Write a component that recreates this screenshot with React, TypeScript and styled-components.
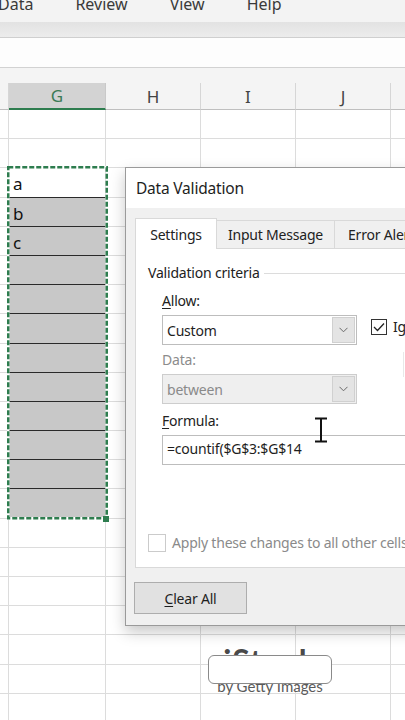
import React from "react";
import styled, { createGlobalStyle, css } from "styled-components";

const GlobalStyle = createGlobalStyle`
  html, body { margin: 0; padding: 0; background: #fff; }
  body { width: 405px; height: 720px; overflow: hidden; font-family: "Noto Sans", "Open Sans", sans-serif; }
  * { box-sizing: border-box; }
`;

const UI = `"Noto Sans", "Open Sans", sans-serif`;

const Screen = styled.div`
  position: relative;
  width: 405px;
  height: 720px;
  overflow: hidden;
  background: #fff;
  font-family: ${UI};
`;

const MenuBar = styled.div`
  height: 22px;
  background: #f3f3f3;
  display: flex;
  gap: 42px;
  margin-left: -2px;
  overflow: hidden;
`;

const MenuItem = styled.span`
  font-size: 16px;
  line-height: 16px;
  margin-top: -4px;
  color: #3a3a3a;
  white-space: nowrap;
`;

const RibbonEdge = styled.div`
  height: 16px;
  background: linear-gradient(#e2e2e2, #ececec);
  border-bottom: 1px solid #cfcfcf;
`;

const FormulaBar = styled.div`
  height: 30px;
  background: #fdfdfd;
  border-bottom: 1px solid #d2d2d2;
`;

const HeaderBand = styled.div`
  height: 42px;
  background: #f4f4f4;
  padding-top: 15px;
  display: flex;
`;

const HeaderCell = styled.div<{ $w: number; $sel?: boolean }>`
  width: ${(p) => p.$w}px;
  flex: none;
  height: 27px;
  display: flex;
  align-items: center;
  justify-content: center;
  font-size: 17px;
  color: #444;
  border-right: 1px solid #d6d6d6;
  border-bottom: 1px solid #bfbfbf;
  ${(p) =>
    p.$sel &&
    css`
      background: #d3d3d3;
      color: #3b7a55;
      border-bottom: 2px solid #2e7d4f;
      border-right-color: #c9c9c9;
    `}
`;

const Grid = styled.div`
  display: flex;
`;

const Column = styled.div<{ $w: number }>`
  width: ${(p) => p.$w}px;
  flex: none;
  display: flex;
  flex-direction: column;
`;

const Cell = styled.div`
  height: 29.2px;
  flex: none;
  border-right: 1px solid #dcdcdc;
  border-bottom: 1px solid #dcdcdc;
`;

const Selection = styled.div`
  position: relative;
  display: flex;
  flex-direction: column;
`;

const SelCell = styled.div<{ $filled: boolean; $last?: boolean }>`
  height: 29.2px;
  flex: none;
  background: ${(p) => (p.$filled ? "#c8c8c8" : "#fff")};
  border-right: 1px solid #c8c8c8;
  border-bottom: 1px solid ${(p) => (p.$last ? "#dcdcdc" : "#2a2a2a")};
  font-size: 17px;
  line-height: 31px;
  padding-left: 4px;
  color: #111;
`;

const Ants = styled.svg`
  position: absolute;
  left: -2px;
  top: -2px;
  pointer-events: none;
`;

const FillHandle = styled.span`
  position: absolute;
  right: -3px;
  bottom: -3px;
  width: 6px;
  height: 6px;
  background: #2e7d4f;
`;

/* ---------- dialog ---------- */

const Dialog = styled.div`
  position: absolute;
  left: 125px;
  top: 167px;
  width: 300px;
  height: 459px;
  border: 1px solid #9a9a9a;
  background: #f0f0f0;
  box-shadow: 0 6px 14px rgba(0, 0, 0, 0.22);
  display: flex;
  flex-direction: column;
  letter-spacing: -0.2px;
`;

const TitleBar = styled.div`
  height: 40px;
  flex: none;
  background: #fff;
  display: flex;
  align-items: center;
  padding-left: 10px;
  font-size: 15.5px;
  color: #1e1e1e;
`;

const Body = styled.div`
  flex: 1;
  padding: 10px 0 0 9px;
  display: flex;
  flex-direction: column;
`;

const TabRow = styled.div`
  display: flex;
  align-items: flex-end;
  height: 30px;
  flex: none;
`;

const Tab = styled.div<{ $w: number; $active?: boolean }>`
  width: ${(p) => p.$w}px;
  flex: none;
  height: 28px;
  border: 1px solid #d9d9d9;
  border-bottom: none;
  border-left-width: ${(p) => (p.$active ? 1 : 0)}px;
  background: #f0f0f0;
  font-size: 14px;
  color: #222;
  display: flex;
  align-items: center;
  justify-content: center;
  white-space: nowrap;
  ${(p) =>
    p.$active &&
    css`
      height: 31px;
      margin-bottom: -1px;
      background: #fff;
      position: relative;
      z-index: 1;
    `}
`;

const TabTail = styled(Tab)`
  justify-content: flex-start;
  padding-left: 13px;
`;

const Panel = styled.div`
  height: 320px;
  flex: none;
  background: #fff;
  border: 1px solid #d9d9d9;
  border-right: none;
  padding: 15px 0 15px 12px;
  display: flex;
  flex-direction: column;
`;

const GroupTitle = styled.div`
  display: flex;
  align-items: center;
  gap: 4px;
  font-size: 14px;
  line-height: 18px;
  color: #222;
  white-space: nowrap;
  &::after {
    content: "";
    flex: 1;
    border-top: 1px solid #dcdcdc;
  }
`;

const Fields = styled.div`
  padding-left: 14px;
  display: flex;
  flex-direction: column;
`;

const FieldLabel = styled.div<{ $disabled?: boolean; $top: number }>`
  font-size: 14px;
  line-height: 18px;
  margin-top: ${(p) => p.$top}px;
  margin-bottom: 5px;
  color: ${(p) => (p.$disabled ? "#8c8c8c" : "#222")};
  u {
    text-decoration-thickness: 1px;
    text-underline-offset: 2px;
  }
`;

const FieldRow = styled.div`
  display: flex;
  align-items: flex-start;
`;

const Select = styled.div<{ $disabled?: boolean }>`
  width: 195px;
  height: 30px;
  flex: none;
  border: 1px solid ${(p) => (p.$disabled ? "#cdcdcd" : "#bdbdbd")};
  background: ${(p) => (p.$disabled ? "#efefef" : "#fff")};
  display: flex;
  align-items: center;
  padding-left: 4px;
  font-size: 14px;
  color: ${(p) => (p.$disabled ? "#8a8a8a" : "#1e1e1e")};
`;

const SelectText = styled.span`
  flex: 1;
`;

const DropButton = styled.div`
  width: 23px;
  height: 26px;
  margin-right: 1px;
  background: #e4e4e4;
  border: 1px solid #d0d0d0;
  display: flex;
  align-items: center;
  justify-content: center;
`;

const CheckBox = styled.div<{ $size: number; $disabled?: boolean }>`
  width: ${(p) => p.$size}px;
  height: ${(p) => p.$size}px;
  flex: none;
  border: 1px solid ${(p) => (p.$disabled ? "#cbcbcb" : "#333")};
  background: #fff;
  display: flex;
  align-items: center;
  justify-content: center;
`;

const IgnoreGroup = styled.div`
  display: flex;
  align-items: center;
  gap: 6px;
  margin-left: 14px;
  margin-top: 2px;
  font-size: 14px;
  color: #222;
  white-space: nowrap;
`;

const FaintEdge = styled.div`
  width: 6px;
  height: 25px;
  margin: -22px 0 0 46px;
  border-left: 1px solid #e8e8e8;
`;

const FormulaInput = styled.div`
  width: 260px;
  height: 30px;
  border: 1px solid #bdbdbd;
  display: flex;
  align-items: center;
  padding: 0 0 3px 4px;
  font-size: 14px;
  color: #1e1e1e;
  white-space: nowrap;
`;

const ApplyRow = styled.div`
  margin-top: auto;
  display: flex;
  align-items: center;
  gap: 6px;
  font-size: 14px;
  color: #8a8a8a;
  white-space: nowrap;
`;

const Footer = styled.div`
  padding-top: 14px;
  display: flex;
`;

const Button = styled.div`
  width: 113px;
  height: 32px;
  margin-left: -1px;
  background: #e1e1e1;
  border: 1px solid #adadad;
  display: flex;
  align-items: center;
  justify-content: center;
  font-size: 14px;
  color: #1e1e1e;
  u {
    text-decoration-thickness: 1px;
    text-underline-offset: 2px;
  }
`;

const Cursor = styled.svg`
  position: absolute;
  left: 314px;
  top: 417px;
`;

/* ---------- watermark ---------- */

const Watermark = styled.div`
  position: absolute;
  left: 208px;
  top: 645px;
  width: 124px;
  display: flex;
  flex-direction: column;
  align-items: center;
`;

const WmLogo = styled.div`
  font-family: "Lato", sans-serif;
  font-weight: 700;
  font-size: 32px;
  line-height: 32px;
  color: #4a4a4a;
  letter-spacing: 1px;
`;

const WmSub = styled.div`
  font-family: "Lato", sans-serif;
  font-size: 15px;
  line-height: 16px;
  margin-top: 1px;
  color: #5a5a5a;
`;

const WmBox = styled.div`
  position: absolute;
  left: 0;
  top: 10px;
  width: 124px;
  height: 29px;
  background: #fff;
  border: 1px solid #8a8a8a;
  border-radius: 6px;
`;

const Chevron = () => (
  <svg width="9" height="6" viewBox="0 0 9 6">
    <polyline points="0.5,0.8 4.5,4.8 8.5,0.8" fill="none" stroke="#6a6a6a" strokeWidth="1" />
  </svg>
);

const colWidths = [9, 97, 95, 95, 95, 100];
const headers = ["", "G", "H", "I", "J", ""];
const ROWS = 21;
const selLabels = ["a", "b", "c", "", "", "", "", "", "", "", "", ""];

export default function App() {
  return (
    <Screen>
      <GlobalStyle />
      <MenuBar>
        <MenuItem>Data</MenuItem>
        <MenuItem>Review</MenuItem>
        <MenuItem>View</MenuItem>
        <MenuItem>Help</MenuItem>
      </MenuBar>
      <RibbonEdge />
      <FormulaBar />
      <HeaderBand>
        {headers.map((h, i) => (
          <HeaderCell key={i} $w={colWidths[i]} $sel={h === "G"}>
            {h}
          </HeaderCell>
        ))}
      </HeaderBand>
      <Grid>
        {colWidths.map((w, ci) => (
          <Column key={ci} $w={w}>
            {ci === 1 ? (
              <>
                <Cell />
                <Cell />
                <Selection>
                  {selLabels.map((t, i) => (
                    <SelCell key={i} $filled={i > 0} $last={i === selLabels.length - 1}>
                      {t}
                    </SelCell>
                  ))}
                  <Ants width="101" height="354" viewBox="0 0 101 354">
                    <rect x="1.25" y="1.25" width="98.5" height="351" fill="none" stroke="#fff" strokeWidth="2.5" />
                    <rect
                      x="1.25"
                      y="1.25"
                      width="98.5"
                      height="351"
                      fill="none"
                      stroke="#2e7d4f"
                      strokeWidth="2.5"
                      strokeDasharray="5 2"
                    />
                  </Ants>
                  <FillHandle />
                </Selection>
                {Array.from({ length: ROWS - 14 }).map((_, i) => (
                  <Cell key={"b" + i} />
                ))}
              </>
            ) : (
              Array.from({ length: ROWS }).map((_, i) => <Cell key={i} />)
            )}
          </Column>
        ))}
      </Grid>

      <Watermark>
        <WmLogo>iStock</WmLogo>
        <WmSub>by Getty Images</WmSub>
        <WmBox />
      </Watermark>

      <Dialog>
        <TitleBar>Data Validation</TitleBar>
        <Body>
          <TabRow>
            <Tab $w={82} $active>
              Settings
            </Tab>
            <Tab $w={118}>Input Message</Tab>
            <TabTail $w={100}>Error Alert</TabTail>
          </TabRow>
          <Panel>
            <GroupTitle>Validation criteria</GroupTitle>
            <Fields>
              <FieldLabel $top={10}>
                <u>A</u>llow:
              </FieldLabel>
              <FieldRow>
                <Select>
                  <SelectText>Custom</SelectText>
                  <DropButton>
                    <Chevron />
                  </DropButton>
                </Select>
                <IgnoreGroup>
                  <CheckBox $size={16}>
                    <svg width="12" height="10" viewBox="0 0 12 10">
                      <polyline points="1,5 4.5,8.5 11,1.5" fill="none" stroke="#222" strokeWidth="1.3" />
                    </svg>
                  </CheckBox>
                  Ignore blank
                </IgnoreGroup>
              </FieldRow>
              <FieldLabel $top={6} $disabled>
                Data:
              </FieldLabel>
              <FieldRow>
                <Select $disabled>
                  <SelectText>between</SelectText>
                  <DropButton>
                    <Chevron />
                  </DropButton>
                </Select>
                <FaintEdge />
              </FieldRow>
              <FieldLabel $top={8}>
                <u>F</u>ormula:
              </FieldLabel>
              <FormulaInput>=countif($G$3:$G$14</FormulaInput>
            </Fields>
            <ApplyRow>
              <CheckBox $size={18} $disabled />
              Apply these changes to all other cells with the same settings
            </ApplyRow>
          </Panel>
          <Footer>
            <Button>
              <u>C</u>lear All
            </Button>
          </Footer>
        </Body>
      </Dialog>

      <Cursor width="14" height="26" viewBox="0 0 14 26">
        <path d="M1 1.5 H13 M7 1.5 V24.5 M1 24.5 H13" fill="none" stroke="#111" strokeWidth="2" />
      </Cursor>
    </Screen>
  );
}
